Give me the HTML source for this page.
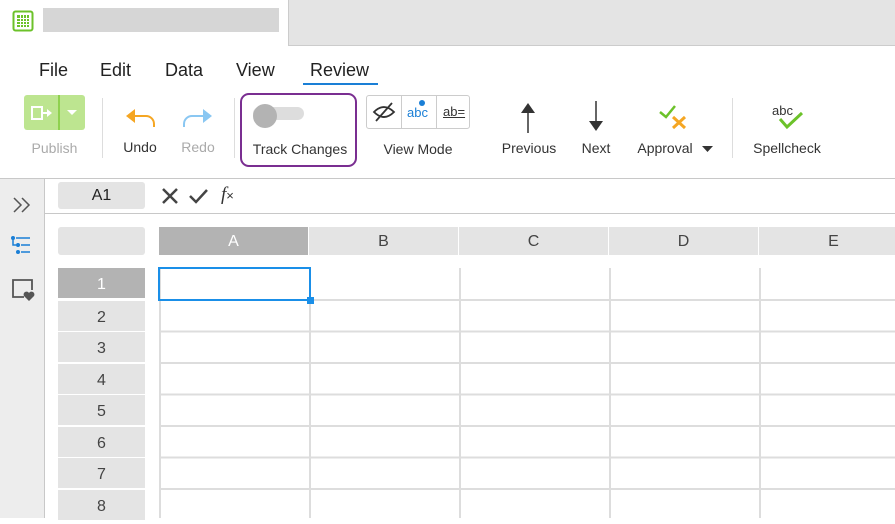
<html><head><style>
body{margin:0;width:895px;height:518px;overflow:hidden;background:#fff;font-family:"Liberation Sans",sans-serif;position:relative}
.a{position:absolute}
.m{font-size:18px;color:#222;top:60px}
.l{font-size:14px;color:#333;text-align:center}
.ch{position:absolute;top:227px;height:28px;background:#e4e4e4;color:#444;font-size:16px;line-height:30px;text-align:center;width:149px}
.rh{position:absolute;left:58px;width:87px;height:30px;background:#e4e4e4;color:#444;font-size:16px;line-height:34px;text-align:center}
</style></head><body>
<div class="a" style="left:288px;top:0;width:607px;height:45px;background:#e4e4e4;border-left:1px solid #ccc;border-bottom:1px solid #ccc"></div>
<div class="a" style="left:43px;top:8px;width:236px;height:24px;background:#d6d6d6"></div>
<svg class="a" style="left:12px;top:10px" width="24" height="24"><rect x="1.5" y="1.5" width="19" height="19" rx="2" fill="#fff" stroke="#6cc22a" stroke-width="2"/><g fill="#6cc22a"><rect x="5" y="5" width="12" height="12"/></g><g stroke="#fff" stroke-width="1"><path d="M5 8.5h12M5 11.5h12M5 14.5h12M8.5 5v12M11.5 5v12M14.5 5v12"/></g></svg>
<div class="a m" style="left:39px">File</div><div class="a m" style="left:100px">Edit</div><div class="a m" style="left:165px">Data</div><div class="a m" style="left:236px">View</div><div class="a m" style="left:310px">Review</div>
<div class="a" style="left:303px;top:83px;width:75px;height:2px;background:#1a7fd6"></div>
<div class="a" style="left:24px;top:95px;width:61px;height:35px;background:#bde590;border-radius:3px"></div>
<div class="a" style="left:58px;top:95px;width:2px;height:35px;background:#8fd14f"></div>
<svg class="a" style="left:30px;top:104px" width="26" height="18"><path d="M2 3h10v12H2z" fill="none" stroke="#fff" stroke-width="2"/><path d="M12 9h6" stroke="#fff" stroke-width="2"/><path d="M17 5l5 4-5 4z" fill="#fff"/></svg>
<svg class="a" style="left:66px;top:109px" width="12" height="8"><path d="M1 1h10L6 6z" fill="#fff"/></svg>
<div class="a l" style="left:24px;top:140px;width:61px;color:#aaa">Publish</div>
<div class="a" style="left:102px;top:98px;width:1px;height:60px;background:#ddd"></div>
<svg class="a" style="left:124px;top:106px" width="34" height="24"><path d="M10 10h12a8 8 0 0 1 8 8v3" fill="none" stroke="#f5a623" stroke-width="2"/><path d="M2 10l9-7v14z" fill="#f5a623"/></svg>
<div class="a l" style="left:118px;top:139px;width:44px">Undo</div>
<svg class="a" style="left:180px;top:106px" width="34" height="24"><path d="M24 10H12a8 8 0 0 0-8 8v3" fill="none" stroke="#8ac7f2" stroke-width="2"/><path d="M32 10l-9-7v14z" fill="#8ac7f2"/></svg>
<div class="a l" style="left:176px;top:139px;width:44px;color:#aaa">Redo</div>
<div class="a" style="left:234px;top:98px;width:1px;height:60px;background:#ddd"></div>
<div class="a" style="left:240px;top:93px;width:117px;height:74px;border:2px solid #7a2e91;border-radius:9px;box-sizing:border-box"></div>
<div class="a" style="left:253px;top:107px;width:51px;height:13px;background:#ddd;border-radius:7px"></div>
<div class="a" style="left:253px;top:104px;width:24px;height:24px;background:#b3b3b3;border-radius:50%"></div>
<div class="a l" style="left:240px;top:141px;width:120px">Track Changes</div>
<div class="a" style="left:366px;top:95px;width:104px;height:34px;border:1px solid #ccc;border-radius:3px;box-sizing:border-box"></div>
<div class="a" style="left:401px;top:95px;width:1px;height:34px;background:#ccc"></div>
<div class="a" style="left:436px;top:95px;width:1px;height:34px;background:#ccc"></div>
<svg class="a" style="left:372px;top:101px" width="24" height="22"><path d="M2 11q10-10 20 0q-10 10-20 0z" fill="none" stroke="#333" stroke-width="1.8"/><path d="M4 20L20 2" stroke="#333" stroke-width="1.8"/></svg>
<div class="a" style="left:407px;top:105px;font-size:13px;color:#1a7fd6">abc</div>
<div class="a" style="left:419px;top:100px;width:6px;height:6px;background:#1a7fd6;border-radius:50%"></div>
<div class="a" style="left:443px;top:104px;font-size:13px;color:#333;text-decoration:underline">ab=</div>
<div class="a l" style="left:366px;top:141px;width:104px">View Mode</div>
<svg class="a" style="left:518px;top:101px" width="20" height="32"><path d="M10 10v22" stroke="#333" stroke-width="1.5"/><path d="M3 12L10 2l7 10z" fill="#333"/></svg>
<div class="a l" style="left:496px;top:140px;width:66px">Previous</div>
<svg class="a" style="left:586px;top:101px" width="20" height="32"><path d="M10 0v22" stroke="#333" stroke-width="1.5"/><path d="M3 20l7 10 7-10z" fill="#333"/></svg>
<div class="a l" style="left:576px;top:140px;width:40px">Next</div>
<svg class="a" style="left:658px;top:103px" width="32" height="28"><path d="M2 9l6 5 9-11" fill="none" stroke="#6cc22a" stroke-width="2.5"/><path d="M15 14l12 11M27 14L15 25" stroke="#f5a623" stroke-width="3"/></svg>
<div class="a l" style="left:634px;top:140px;width:62px">Approval</div>
<svg class="a" style="left:701px;top:145px" width="13" height="8"><path d="M1 1h11L6.5 7z" fill="#333"/></svg>
<div class="a" style="left:732px;top:98px;width:1px;height:60px;background:#ddd"></div>
<div class="a" style="left:772px;top:103px;font-size:13px;color:#333">abc</div>
<svg class="a" style="left:778px;top:111px" width="26" height="20"><path d="M2 8l7 8L24 2" fill="none" stroke="#6cc22a" stroke-width="3"/></svg>
<div class="a l" style="left:747px;top:140px;width:80px">Spellcheck</div>
<div class="a" style="left:0;top:178px;width:895px;height:1px;background:#c8c8c8"></div>
<div class="a" style="left:0;top:179px;width:44px;height:339px;background:#ededed;border-right:1px solid #c8c8c8"></div>
<svg class="a" style="left:12px;top:196px" width="22" height="18"><path d="M2 2l7 7-7 7M10 2l7 7-7 7" fill="none" stroke="#555" stroke-width="1.5"/></svg>
<svg class="a" style="left:10px;top:235px" width="24" height="22"><g fill="#1a7fd6"><circle cx="3" cy="3" r="2"/><circle cx="8" cy="10" r="2"/><circle cx="8" cy="17" r="2"/></g><path d="M3 3v7h3M6 3h14M11 10h9M11 17h9" stroke="#1a7fd6" stroke-width="1.5" fill="none"/></svg>
<svg class="a" style="left:10px;top:277px" width="26" height="26"><path d="M14 20H3V3h19v10" fill="none" stroke="#555" stroke-width="1.8"/><path d="M19 24l-5-5a2.5 2.5 0 0 1 5-3 2.5 2.5 0 0 1 5 3z" fill="#555"/></svg>
<div class="a" style="left:58px;top:182px;width:87px;height:27px;background:#e4e4e4;border-radius:3px;font-size:16px;line-height:28px;text-align:center;color:#222">A1</div>
<svg class="a" style="left:160px;top:186px" width="86" height="22"><path d="M3 3l14 14M17 3L3 17" stroke="#444" stroke-width="2.5"/><path d="M30 10l6 6 11-12" stroke="#444" stroke-width="2.5" fill="none"/></svg>
<div class="a" style="left:221px;top:184px;font-size:19px;font-style:italic;font-family:'Liberation Serif',serif;color:#333">f<span style="font-size:13px;font-style:normal;font-family:'Liberation Sans'">×</span></div>
<div class="a" style="left:45px;top:213px;width:850px;height:1px;background:#c8c8c8"></div>
<div class="a" style="left:58px;top:227px;width:87px;height:28px;background:#e4e4e4;border-radius:3px"></div>
<div class="ch" style="left:159px;background:#b3b3b3;color:#fff">A</div>
<div class="ch" style="left:309px">B</div><div class="ch" style="left:459px">C</div><div class="ch" style="left:609px">D</div><div class="ch" style="left:759px">E</div>
<svg class="a" style="left:159px;top:268px" width="736" height="250"><g stroke="#ddd" stroke-width="2"><path d="M1 0v250M151 0v250M301 0v250M451 0v250M601 0v250M0 32h736M0 63.5h736M0 95h736M0 126.5h736M0 158h736M0 189.5h736M0 221h736"/></g></svg>
<div class="rh" style="top:268px;background:#b3b3b3;color:#fff">1</div>
<div class="rh" style="top:301px">2</div><div class="rh" style="top:332px">3</div><div class="rh" style="top:364px">4</div><div class="rh" style="top:395px">5</div><div class="rh" style="top:427px">6</div><div class="rh" style="top:458px">7</div><div class="rh" style="top:490px">8</div>
<div class="a" style="left:158px;top:267px;width:153px;height:34px;border:2px solid #1a8fe8;box-sizing:border-box"></div>
<div class="a" style="left:307px;top:297px;width:7px;height:7px;background:#1a8fe8"></div>
</body></html>
